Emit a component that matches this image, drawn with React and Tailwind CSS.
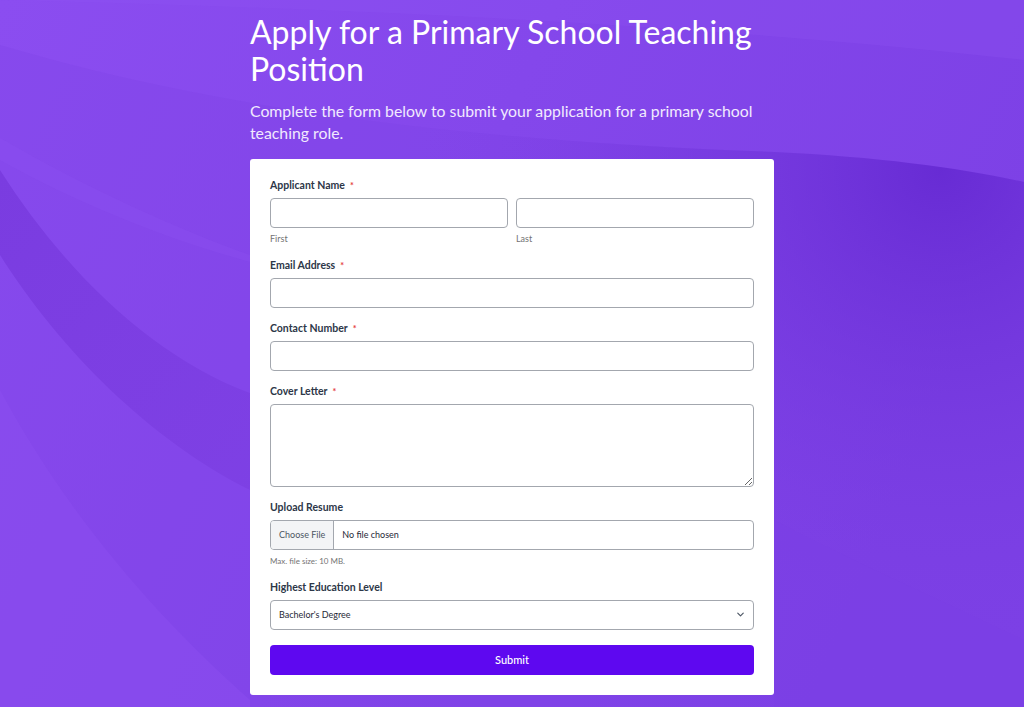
import { ChevronDown } from 'lucide-react';

const fieldLabel = 'block text-[10.5px] leading-[13px] font-bold text-[#2d3748] mb-[6px]';
const inputBox = 'block w-full h-[30px] rounded-[4px] border border-[#a3a7ae] bg-white px-2 text-[11px] outline-none';

function Required() {
  return <span className="ml-[5px] text-[9px] text-[#e53e3e] align-top">*</span>;
}

// wavy purple backdrop
function Backdrop() {
  return (
    <svg className="absolute inset-0 w-full h-full" viewBox="0 0 1024 707" preserveAspectRatio="none">
      <defs>
        <linearGradient id="base" x1="0" y1="0" x2="1" y2="0.3">
          <stop offset="0" stopColor="#8b4df0" />
          <stop offset="1" stopColor="#7d41e6" />
        </linearGradient>
        <radialGradient id="wave" gradientUnits="userSpaceOnUse" cx="940" cy="170" r="520">
          <stop offset="0" stopColor="#6529d2" stopOpacity="0.9" />
          <stop offset="0.5" stopColor="#7236dc" stopOpacity="0.45" />
          <stop offset="1" stopColor="#7d41e6" stopOpacity="0" />
        </radialGradient>
        <linearGradient id="band" x1="0" y1="0" x2="1" y2="1">
          <stop offset="0" stopColor="#7a3ce0" />
          <stop offset="1" stopColor="#7a3ce0" stopOpacity="0.4" />
        </linearGradient>
      </defs>
      <rect width="1024" height="707" fill="url(#base)" />
      <path d="M0,0 L1024,0 L1024,60 C760,30 420,10 0,0 Z" fill="#8e52f2" opacity="0.3" />
      <path d="M0,45 C220,110 460,140 774,152 C880,157 960,168 1024,182 L1024,707 L0,707 Z" fill="#7a3ee2" opacity="0.25" />
      <path d="M0,45 C220,110 460,140 774,152 C880,157 960,168 1024,182 L1024,707 L0,707 Z" fill="url(#wave)" />
      <path d="M0,138 C90,190 180,230 250,255 L250,262 C170,240 80,205 0,160 Z" fill="#8e52f2" opacity="0.25" />
      <path d="M0,170 C70,280 160,360 250,393 C320,420 360,430 420,440 L420,560 C330,540 270,520 250,490 C150,440 60,350 0,255 Z" fill="url(#band)" />
      <path d="M0,390 C70,520 160,620 250,700 L250,707 L0,707 Z" fill="#8c4ef0" opacity="0.5" />
      <path d="M774,520 C850,560 940,600 1024,640 L1024,707 L774,707 Z" fill="#7b3fe3" opacity="0.3" />
    </svg>
  );
}

export default function App() {
  return (
    <div className="relative min-h-screen h-[707px] overflow-hidden font-['Lato','Noto_Sans',sans-serif]">
      <Backdrop />
      <div className="relative mx-auto w-[524px] pt-[13px]">
        <h1 className="text-[32px] leading-[37px] font-normal text-white">
          Apply for a Primary School Teaching Position
        </h1>
        <p className="mt-[13px] text-[15.8px] leading-[22px] text-[#f1eafe]">
          Complete the form below to submit your application for a primary school teaching role.
        </p>

        <form className="mt-[15px] bg-white rounded-[3px] px-[20px] pt-[20px] pb-[20px]">
          {/* Applicant name */}
          <label className={fieldLabel}>
            Applicant Name<Required />
          </label>
          <div className="grid grid-cols-2 gap-[8px]">
            <div>
              <input type="text" className={inputBox} />
              <span className="block mt-[6px] text-[9px] leading-[10px] text-[#737373]">First</span>
            </div>
            <div>
              <input type="text" className={inputBox} />
              <span className="block mt-[6px] text-[9px] leading-[10px] text-[#737373]">Last</span>
            </div>
          </div>

          <div className="mt-[15px]">
            <label className={fieldLabel}>
              Email Address<Required />
            </label>
            <input type="email" className={inputBox} />
          </div>

          <div className="mt-[14px]">
            <label className={fieldLabel}>
              Contact Number<Required />
            </label>
            <input type="tel" className={inputBox} />
          </div>

          <div className="mt-[14px]">
            <label className={fieldLabel}>
              Cover Letter<Required />
            </label>
            <textarea className="block w-full h-[83px] rounded-[4px] border border-[#a3a7ae] bg-white px-2 py-1 text-[11px] outline-none" />
          </div>

          <div className="mt-[14px]">
            <label className={fieldLabel}>Upload Resume</label>
            <div className="flex h-[30px] rounded-[4px] border border-[#a3a7ae] overflow-hidden">
              <span className="flex items-center px-[8px] bg-[#f3f4f6] border-r border-[#a3a7ae] text-[9px] text-[#4b5563]">
                Choose File
              </span>
              <span className="flex items-center pl-[8px] text-[9px] text-[#1f2937]">No file chosen</span>
            </div>
            <span className="block mt-[6px] text-[8px] leading-[10px] text-[#737373]">Max. file size: 10 MB.</span>
          </div>

          <div className="mt-[15px]">
            <label className={fieldLabel}>Highest Education Level</label>
            <div className="relative">
              <select
                defaultValue="bachelor"
                className="block w-full h-[30px] appearance-none rounded-[4px] border border-[#a3a7ae] bg-white pl-[8px] text-[9px] text-[#1f2937] outline-none"
              >
                <option value="highschool">High School</option>
                <option value="bachelor">Bachelor's Degree</option>
                <option value="master">Master's Degree</option>
                <option value="doctorate">Doctorate</option>
              </select>
              <ChevronDown size={11} strokeWidth={2.5} className="absolute right-[8px] top-[9px] text-[#4b5563] pointer-events-none" />
            </div>
          </div>

          <button
            type="button"
            className="mt-[15px] block w-full h-[30px] rounded-[4px] bg-[#5e08f0] text-white text-[11px] font-medium"
          >
            Submit
          </button>
        </form>
      </div>
    </div>
  );
}
